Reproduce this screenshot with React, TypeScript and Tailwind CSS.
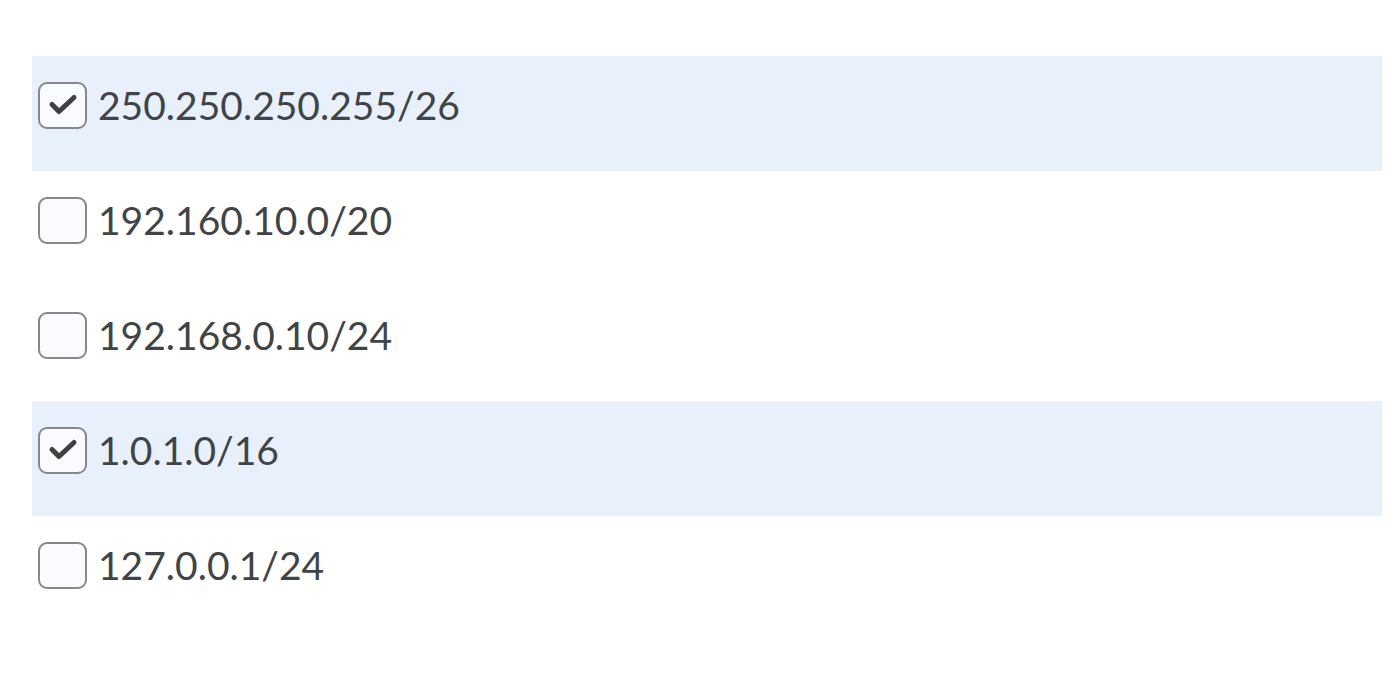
import { useState } from 'react';

const items = [
  { label: '250.250.250.255/26', checked: true },
  { label: '192.160.10.0/20', checked: false },
  { label: '192.168.0.10/24', checked: false },
  { label: '1.0.1.0/16', checked: true },
  { label: '127.0.0.1/24', checked: false },
];

function Check({ checked }: { checked: boolean }) {
  return (
    <span className="flex h-[47px] w-[49px] shrink-0 items-center justify-center rounded-[9px] border-2 border-[#86888a] bg-[#f9fbfe]">
      {checked && (
        <svg width="30" height="24" viewBox="0 0 30 24" fill="none">
          <path d="M4 11.5 L11 18.5 L26 4.5" stroke="#3e4043" strokeWidth="5" strokeLinecap="round" strokeLinejoin="round" />
        </svg>
      )}
    </span>
  );
}

export default function App() {
  const [rows, setRows] = useState(items);

  const toggle = (i: number) =>
    setRows(rows.map((r, j) => (j === i ? { ...r, checked: !r.checked } : r)));

  return (
    <div className="min-h-screen bg-white pt-[56px] pl-[32px] pr-[16px] font-['Lato','Noto_Sans',sans-serif]">
      {rows.map((r, i) => (
        <label
          key={r.label}
          onClick={() => toggle(i)}
          className={`flex h-[115px] cursor-pointer items-center gap-[11px] pl-[6px] pb-[17px] ${r.checked ? 'bg-[#e8f0fc]' : 'bg-white'}`}
        >
          <Check checked={r.checked} />
          <span className="text-[39px] leading-none text-[#414447]">{r.label}</span>
        </label>
      ))}
    </div>
  );
}
